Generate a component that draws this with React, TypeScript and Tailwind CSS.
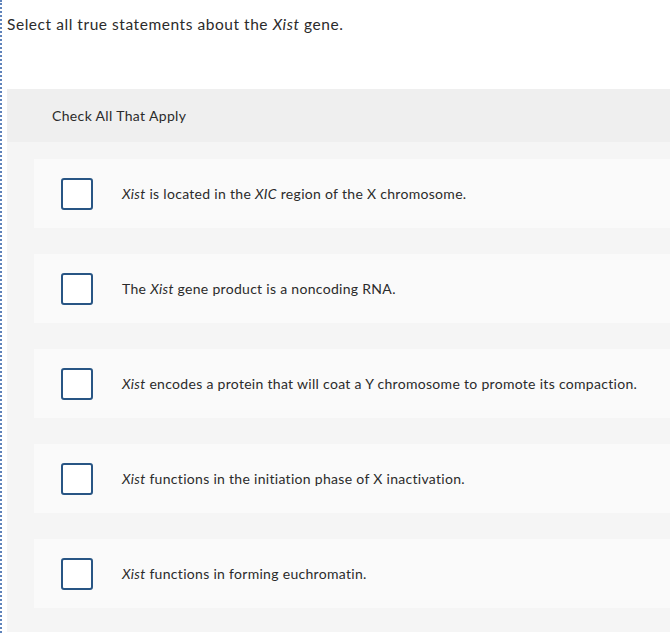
import React from "react";

const options: React.ReactNode[] = [
  <><i>Xist</i> is located in the <i>XIC</i> region of the X chromosome.</>,
  <>The <i>Xist</i> gene product is a noncoding RNA.</>,
  <><i>Xist</i> encodes a protein that will coat a Y chromosome to promote its compaction.</>,
  <><i>Xist</i> functions in the initiation phase of X inactivation.</>,
  <><i>Xist</i> functions in forming euchromatin.</>,
];

export default function App() {
  return (
    <div className="min-h-[633px] w-[670px] overflow-hidden bg-white border-l-2 border-dotted border-[#5f83bb] pl-[5px] text-[#2b2b2b] font-['Lato',sans-serif]">
      <p className="pt-[14px] h-[89px] text-[15.5px] leading-[20px] tracking-[0.55px]">
        Select all true statements about the <i>Xist</i> gene.
      </p>
      <div className="bg-[#f5f5f5] pb-[24px]">
        <div className="h-[53px] bg-[#efefef] flex items-center pl-[45px] text-[14px] tracking-[0.35px]">
          Check All That Apply
        </div>
        <div className="flex flex-col gap-[26px] pl-[27px] pt-[17px]">
          {options.map((o, i) => (
            <label key={i} className="h-[69px] bg-[#fafafa] flex items-center cursor-pointer">
              <span className="ml-[27px] w-[32px] h-[32px] border-2 border-[#285584] rounded-[3px] bg-white shrink-0" />
              <span className="ml-[29px] text-[14px] leading-[18px] tracking-[0.3px]">{o}</span>
            </label>
          ))}
        </div>
      </div>
    </div>
  );
}
